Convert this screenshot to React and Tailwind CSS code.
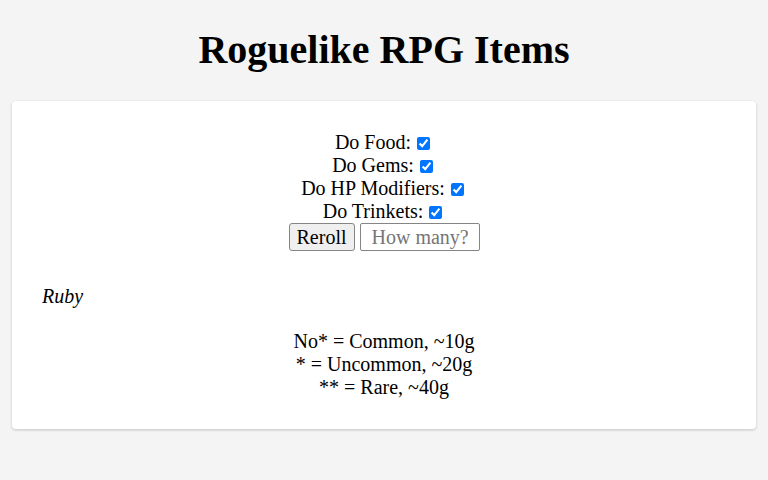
import React from "react";

const Toggle = ({ label }) => (
  <label className="block">
    {label}:
    <input
      type="checkbox"
      defaultChecked
      className="ml-[6px] mr-[3px] my-[3px] w-[13px] h-[13px] align-[-1px]"
    />
  </label>
);

const App = () => {
  return (
    <div
      className="min-h-screen bg-[#f4f4f4] text-black pb-[30px]"
      style={{ fontFamily: '"Liberation Serif", "Times New Roman", serif' }}
    >
      <h1 className="text-[40px] font-bold text-center leading-[46px] pt-[27px] pb-[28px]">
        Roguelike RPG Items
      </h1>
      <div className="mx-[12px] bg-white rounded-[4px] shadow-[0_1px_3px_rgba(0,0,0,0.2)] p-[30px] text-[20px] leading-[23px]">
        <div className="text-center">
          <Toggle label="Do Food" />
          <Toggle label="Do Gems" />
          <Toggle label="Do HP Modifiers" />
          <Toggle label="Do Trinkets" />
          <div className="flex justify-center items-start gap-[5px] h-[29px]">
            <button className="h-[28px] bg-[#efefef] border border-[#858585] rounded-[3px] px-[7px] leading-[23px]">
              Reroll
            </button>
            <input
              type="text"
              placeholder="How many?"
              className="h-[28px] w-[120px] border border-[#858585] rounded-[2px] px-[11px] leading-[24px] placeholder:text-[#757575]"
            />
          </div>
        </div>
        <p className="italic mt-[33px]">Ruby</p>
        <div className="text-center mt-[22px]">
          <div>No* = Common, ~10g</div>
          <div>* = Uncommon, ~20g</div>
          <div>** = Rare, ~40g</div>
        </div>
      </div>
    </div>
  );
};

export default App;
